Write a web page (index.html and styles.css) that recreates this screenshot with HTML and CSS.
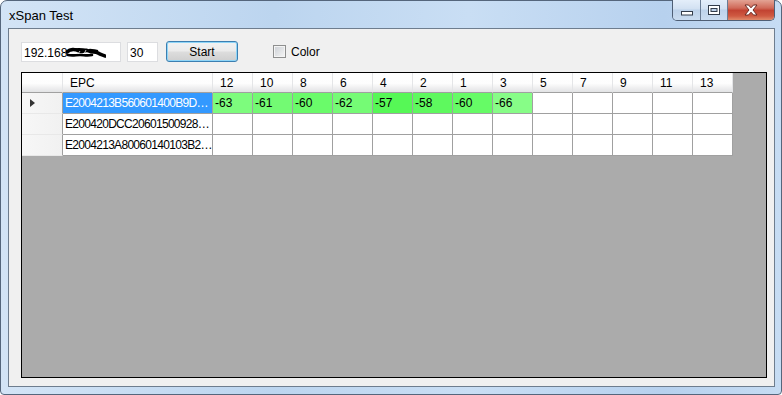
FILE: index.html
```html
<!DOCTYPE html>
<html>
<head>
	<title>xSpan Test</title>
	<link rel="stylesheet" href="styles.css">
</head>
<body>
	<div class="window">
		<div class="titlebar">
			<span class="title">xSpan Test</span>
			<div class="caption-buttons">
				<span class="cap cap-min">
					<svg width="14" height="6" viewBox="0 0 14 6"><rect x="1.5" y="1.5" width="11" height="3.5" fill="#fff" stroke="#333c4a" stroke-width="1"/></svg>
				</span>
				<span class="cap cap-max">
					<svg width="12" height="10" viewBox="0 0 12 10"><rect x="0.5" y="0.5" width="11" height="9" fill="#fff" stroke="#333c4a"/><rect x="3" y="3.5" width="6" height="3" fill="#bcd0e8" stroke="#333c4a"/></svg>
				</span>
				<span class="cap cap-close">
					<svg width="16" height="12" viewBox="0 0 16 12"><path d="M2 1 L5.5 1 L8 3.8 L10.5 1 L14 1 L10 6 L14 11 L10.5 11 L8 8.2 L5.5 11 L2 11 L6 6 Z" fill="#fff" stroke="#6b2a22" stroke-width="1" stroke-linejoin="round"/></svg>
				</span>
			</div>
		</div>
		<div class="client">
			<div class="toolbar">
				<div class="textbox ip">192.168<svg class="scribble" width="40" height="14" viewBox="0 0 40 14"><path d="M1 6 C4 3 9 3 13 5 C16 7 19 3 23 5 C26 7 29 5 32 7 C35 9 37 9 39 10" fill="none" stroke="#000" stroke-width="3.6" stroke-linecap="round"/><path d="M2 9 C6 10 10 9 14 9 C18 9 21 10 26 9 M5 4 C10 3 16 3 21 4 M24 4 C27 4 29 5 31 5" fill="none" stroke="#000" stroke-width="2.6" stroke-linecap="round"/><path d="M12 8 L14 5 M18 8 L20 4" stroke="#f0f0f0" stroke-width="0.8"/></svg></div>
				<div class="textbox secs">30</div>
				<button class="start-btn">Start</button>
				<label class="check"><span class="check-box"></span>Color</label>
			</div>
			<div class="grid">
				<table>
					<colgroup>
						<col class="col-sel">
						<col class="col-epc">
						<col span="13" class="col-ant">
					</colgroup>
					<thead>
						<tr>
							<th class="corner"></th>
							<th>EPC</th>
							<th>12</th><th>10</th><th>8</th><th>6</th><th>4</th><th>2</th><th>1</th>
							<th>3</th><th>5</th><th>7</th><th>9</th><th>11</th><th>13</th>
						</tr>
					</thead>
					<tbody>
						<tr>
							<td class="sel"><span class="arrow"></span></td>
							<td class="epc selected">E2004213B560601400B9D…</td>
							<td class="rssi" style="background:#7dfc7d">-63</td>
							<td class="rssi" style="background:#73fa73">-61</td>
							<td class="rssi" style="background:#6afb6a">-60</td>
							<td class="rssi" style="background:#75fb75">-62</td>
							<td class="rssi" style="background:#56f856">-57</td>
							<td class="rssi" style="background:#5ef95e">-58</td>
							<td class="rssi" style="background:#66fb66">-60</td>
							<td class="rssi" style="background:#87fd87">-66</td>
							<td></td><td></td><td></td><td></td><td></td>
						</tr>
						<tr>
							<td class="sel"></td>
							<td class="epc">E200420DCC20601500928…</td>
							<td></td><td></td><td></td><td></td><td></td><td></td><td></td>
							<td></td><td></td><td></td><td></td><td></td><td></td>
						</tr>
						<tr>
							<td class="sel"></td>
							<td class="epc">E2004213A80060140103B2…</td>
							<td></td><td></td><td></td><td></td><td></td><td></td><td></td>
							<td></td><td></td><td></td><td></td><td></td><td></td>
						</tr>
					</tbody>
				</table>
			</div>
		</div>
	</div>
</body>
</html>
```

FILE: styles.css
```css
html, body {
	margin: 0;
	padding: 0;
}
body {
	width: 782px;
	height: 395px;
	overflow: hidden;
	font-family: "Liberation Sans", Arial, sans-serif;
	font-size: 12px;
	color: #000;
}
.window {
	box-sizing: border-box;
	width: 782px;
	height: 395px;
	display: flex;
	flex-direction: column;
	border: 1px solid #55667c;
	border-radius: 7px 7px 4px 4px;
	background: linear-gradient(to right, #d3e4f6 0%, #bcd5ef 35%, #c9def4 60%, #b7d1ee 85%, #c6dcf3 100%);
	padding: 0 6px 7px 7px;
}
.titlebar {
	height: 27px;
	display: flex;
	justify-content: space-between;
	align-items: flex-start;
}
.title {
	font-size: 13px;
	margin: 7px 0 0 1px;
	color: #000;
}
.caption-buttons {
	display: flex;
	margin-top: -1px;
	height: 20px;
	border: 1px solid #4f5f75;
	border-top: none;
	border-radius: 0 0 5px 5px;
	overflow: hidden;
}
.cap {
	display: flex;
	align-items: center;
	justify-content: center;
	height: 20px;
}
.cap-min, .cap-max {
	width: 27px;
	background: linear-gradient(#e4eefa, #d2e1f2 45%, #bdd2ea 50%, #cadcf0 100%);
	border-right: 1px solid #6b7d95;
}
.cap-min svg {
	margin-top: 5px;
}
.cap-max {
	width: 26px;
}
.cap-close {
	width: 46px;
	background: linear-gradient(#e3a394, #d06a59 40%, #c24332 52%, #cf5a42 80%, #e08a6a 100%);
}
.client {
	flex: 1;
	display: flex;
	flex-direction: column;
	background: #f0f0f0;
	border: 1px solid #6e7d8e;
	padding: 12px 7px 8px 12px;
}
.toolbar {
	display: flex;
	align-items: center;
	height: 21px;
	margin-bottom: 10px;
}
.textbox {
	box-sizing: border-box;
	height: 20px;
	background: #fff;
	border: 1px solid #dcdde0;
	padding: 2px 2px 0 2px;
	display: flex;
	align-items: center;
	white-space: nowrap;
	line-height: 14px;
}
.ip {
	width: 100px;
}
.scribble {
	margin-left: -1px;
}
.secs {
	width: 31px;
	margin-left: 6px;
}
.start-btn {
	box-sizing: border-box;
	width: 72px;
	height: 21px;
	margin-left: 8px;
	font-family: "Liberation Sans", Arial, sans-serif;
	font-size: 12px;
	color: #000;
	border: 1px solid #3c7fb1;
	border-radius: 3px;
	box-shadow: inset 0 0 0 1px #8fd5f7;
	background: linear-gradient(#f2f2f2, #ebebeb 48%, #dddddd 52%, #cfcfcf);
	padding: 0;
}
.check {
	display: flex;
	align-items: center;
	margin-left: 35px;
}
.check-box {
	box-sizing: border-box;
	width: 13px;
	height: 13px;
	margin-right: 5px;
	border: 1px solid #8e8f8f;
	background: linear-gradient(135deg, #cbcfd5, #f6f6f6);
	box-shadow: inset 0 0 0 1px #f4f4f4;
}
.grid {
	flex: 1;
	border: 1px solid #000;
	background: #ababab;
}
table {
	border-collapse: separate;
	border-spacing: 0;
	table-layout: fixed;
	width: 711px;
}
.col-sel {
	width: 41px;
}
.col-epc {
	width: 150px;
}
.col-ant {
	width: 40px;
}
th, td {
	box-sizing: border-box;
	white-space: nowrap;
	overflow: hidden;
	font-weight: normal;
	text-align: left;
}
th {
	height: 20px;
	padding: 0 0 0 7px;
	background: linear-gradient(#ffffff, #fdfdfd 55%, #eeeeef 80%, #e2e3e5);
	border-right: 1px solid #e4e5e7;
	border-bottom: 1px solid #a0a0a0;
}
td {
	height: 21px;
	padding: 0 0 0 2px;
	background: #fff;
	border-right: 1px solid #a0a0a0;
	border-bottom: 1px solid #a0a0a0;
}
td.epc {
	padding-left: 2px;
	letter-spacing: -0.7px;
}
td.selected {
	background: #3399ff;
	color: #fff;
}
td.sel {
	padding: 0;
	background: linear-gradient(to right, #f7f7f7, #f1f1f1);
	border-bottom: 1px solid #e8e8e8;
	vertical-align: middle;
}
.arrow {
	display: block;
	width: 0;
	height: 0;
	margin-left: 8px;
	border-style: solid;
	border-width: 4px 0 4px 5px;
	border-color: transparent transparent transparent #333;
}
```
